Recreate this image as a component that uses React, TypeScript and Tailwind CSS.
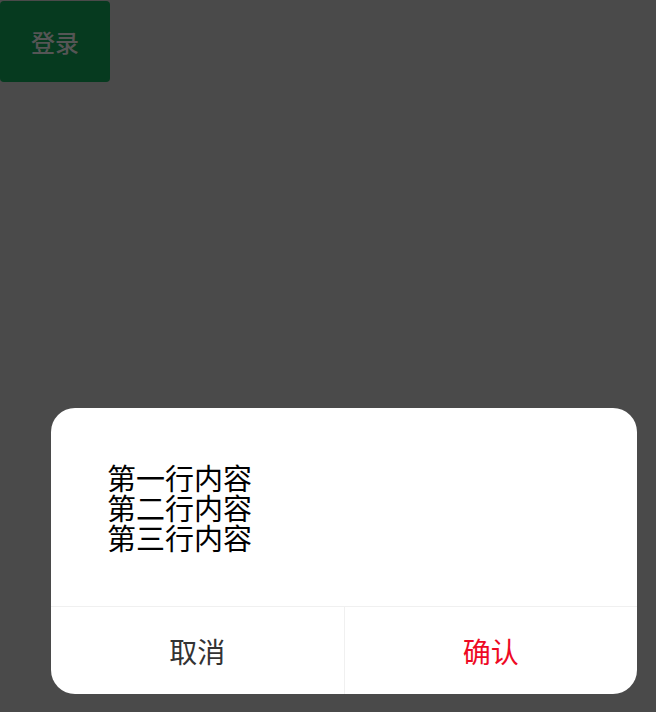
import React from "react";

export default function App() {
  const font = { fontFamily: '"Noto Sans CJK SC", "Noto Sans", sans-serif' };
  return (
    <div className="relative h-[712px] w-full overflow-hidden bg-[#4a4a4a]" style={font}>
      <div className="pt-px">
        <button className="flex h-[81px] w-[110px] items-center justify-center rounded-[4px] bg-[#063a1f] text-[24px] font-medium text-[#555555]">
          登录
        </button>
      </div>
      <div className="absolute left-[51px] top-[408px] w-[586px] overflow-hidden rounded-[24px] bg-white">
        <div className="h-[198px] px-[56px] pt-[54px] text-[29px] leading-[30px] text-black">
          <div>第一行内容</div>
          <div>第二行内容</div>
          <div>第三行内容</div>
        </div>
        <div className="flex h-[88px] border-t border-[#f0f0f0]">
          <div className="flex flex-1 items-center justify-center text-[28px] text-[#333333]">取消</div>
          <div className="w-px bg-[#f0f0f0]" />
          <div className="flex flex-1 items-center justify-center text-[28px] text-[#ee0a24]">确认</div>
        </div>
      </div>
    </div>
  );
}
